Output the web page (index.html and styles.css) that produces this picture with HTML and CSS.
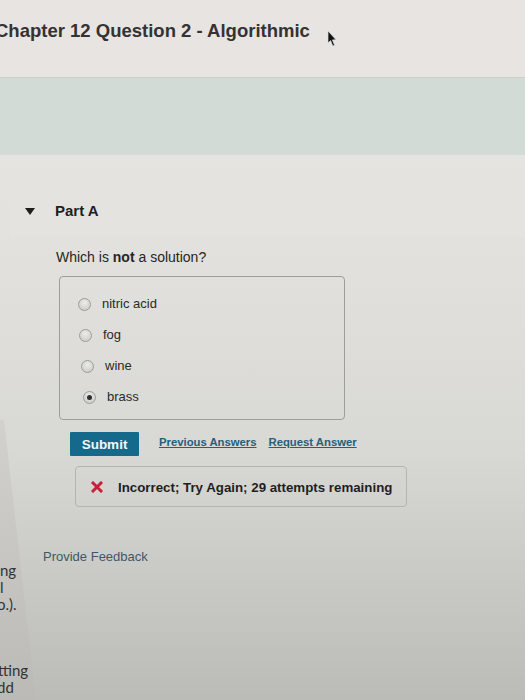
FILE: index.html
```html
<!DOCTYPE html>
<html>
<head>
<meta charset="utf-8">
<link rel="stylesheet" href="styles.css">
</head>
<body>
<div class="page">
  <header class="title-bar">
    <h1 class="title">Chapter 12 Question 2 - Algorithmic</h1>
  </header>
  <div class="band"></div>
  <section class="part">
    <div class="part-head">
      <span class="caret"></span>
      <span class="part-name">Part A</span>
    </div>
    <div class="part-body">
      <p class="question">Which is <b>not</b> a solution?</p>
      <div class="options">
        <label class="opt"><span class="radio"></span><span>nitric acid</span></label>
        <label class="opt"><span class="radio"></span><span>fog</span></label>
        <label class="opt"><span class="radio"></span><span>wine</span></label>
        <label class="opt"><span class="radio checked"></span><span>brass</span></label>
      </div>
      <div class="actions">
        <span class="btn">Submit</span>
        <a class="link">Previous Answers</a>
        <a class="link">Request Answer</a>
      </div>
      <div class="feedback">
        <svg class="xicon" width="12" height="12" viewBox="0 0 12 12"><path d="M2 2 L10 10 M10 2 L2 10" stroke="#c8203a" stroke-width="3" stroke-linecap="square"/></svg>
        <span>Incorrect; Try Again; 29 attempts remaining</span>
      </div>
    </div>
  </section>
  <div class="provide">Provide Feedback</div>

  <svg class="cursor" width="10" height="17" viewBox="0 0 10 17"><path d="M1 1 L1 13 L3.6 10.6 L5.8 16 L7.6 15.2 L5.4 9.9 L9 9.7 Z" fill="#111" stroke="#ddd" stroke-width="0.7"/></svg>

  <div class="sheet">
    <div class="sheet-line l1">ng</div>
    <div class="sheet-line l2">l</div>
    <div class="sheet-line l3">o.).</div>
    <div class="sheet-line l4">tting</div>
    <div class="sheet-line l5">dd</div>
  </div>
</div>
</body>
</html>
```
FILE: styles.css
```css
html, body {
  margin: 0;
  padding: 0;
}
body {
  width: 525px;
  height: 700px;
  overflow: hidden;
  font-family: "Liberation Sans", Arial, sans-serif;
  color: #2b2b2b;
  background: linear-gradient(to bottom, #e8e4e2 0px, #e6e4e1 160px, #e0dfdb 300px, #d8d8d4 450px, #cbcbc7 560px, #bbbbb7 700px);
}
.page {
  position: relative;
  width: 525px;
  height: 700px;
  overflow: hidden;
}
.title-bar {
  height: 77px;
  box-sizing: border-box;
  padding-top: 19px;
}
.title {
  margin: 0 0 0 -5px;
  font-size: 18.5px;
  line-height: 24px;
  font-weight: bold;
  color: #343232;
}
.band {
  height: 78px;
  background: #d2dbd6;
  border-top: 1px solid #c9cfcc;
  box-sizing: border-box;
}
.part {
  margin-top: 30px;
}
.part-head {
  margin-left: 10px;
  height: 52px;
  background: #e4e3df;
  display: flex;
  align-items: center;
  padding-left: 15px;
  box-sizing: border-box;
}
.caret {
  width: 0;
  height: 0;
  border-left: 5.5px solid transparent;
  border-right: 5.5px solid transparent;
  border-top: 7px solid #1e1e1e;
  margin-top: 1px;
}
.part-name {
  margin-left: 20px;
  font-size: 15px;
  font-weight: bold;
  color: #1f1f1f;
  margin-top: -2px;
}
.part-body {
  padding-left: 56px;
}
.question {
  margin: 11px 0 0 0;
  font-size: 14px;
  line-height: 18px;
  color: #262626;
}
.question b {
  font-weight: bold;
}
.options {
  margin: 10px 0 0 3px;
  width: 286px;
  height: 144px;
  box-sizing: border-box;
  border: 1px solid #9d9d9b;
  border-radius: 4px;
  padding: 19px 0 0 18px;
  display: flex;
  flex-direction: column;
  gap: 15px;
}
.opt {
  display: flex;
  align-items: center;
  gap: 11px;
  font-size: 13px;
  line-height: 16px;
  color: #2a2a2a;
}
.opt:nth-child(2) { margin-left: 1px; }
.opt:nth-child(3) { margin-left: 3px; }
.opt:nth-child(4) { margin-left: 5px; }
.radio {
  width: 13px;
  height: 13px;
  box-sizing: border-box;
  border-radius: 50%;
  border: 1px solid #9c9c9a;
  background: radial-gradient(circle at 50% 35%, #ecece9 0%, #c6c6c3 100%);
  display: flex;
  align-items: center;
  justify-content: center;
}
.radio.checked::after {
  content: "";
  width: 5px;
  height: 5px;
  border-radius: 50%;
  background: #2e2e2e;
}
.actions {
  margin: 12px 0 0 14px;
  display: flex;
  align-items: center;
}
.btn {
  display: inline-flex;
  align-items: center;
  justify-content: center;
  width: 69px;
  height: 24px;
  background: #15698a;
  color: #f4f7f8;
  font-size: 13.5px;
  font-weight: bold;
  border-radius: 1px;
}
.link {
  font-size: 11.3px;
  font-weight: bold;
  color: #24607c;
  text-decoration: underline;
  margin-top: -5px;
}
.btn + .link {
  margin-left: 20px;
}
.link + .link {
  margin-left: 12px;
}
.feedback {
  margin: 10px 0 0 19px;
  width: 332px;
  height: 41px;
  box-sizing: border-box;
  border: 1px solid #b4b4b2;
  border-radius: 4px;
  display: flex;
  align-items: center;
  padding-left: 15px;
  gap: 15px;
  font-size: 13.3px;
  font-weight: bold;
  color: #1f1f1f;
}
.feedback span {
  margin-top: 1px;
}
.provide {
  margin: 42px 0 0 43px;
  font-size: 13px;
  color: #3f5868;
}
.cursor {
  position: absolute;
  left: 327px;
  top: 30px;
}
.sheet {
  position: absolute;
  left: 0;
  top: 420px;
  width: 40px;
  height: 280px;
  background: linear-gradient(to bottom, #d2d1ce, #bbbab6);
  clip-path: polygon(0 0, 4px 0, 36px 280px, 0 280px);
  font-family: "Lato", "Liberation Sans", sans-serif;
  color: #333;
  font-size: 15px;
}
.sheet-line {
  position: absolute;
  line-height: 15px;
}
.l1 { top: 143px; left: 0; }
.l2 { top: 160px; left: 0; }
.l3 { top: 177px; left: -3px; }
.l4 { top: 243px; left: -2px; }
.l5 { top: 260px; left: -3px; }
```
